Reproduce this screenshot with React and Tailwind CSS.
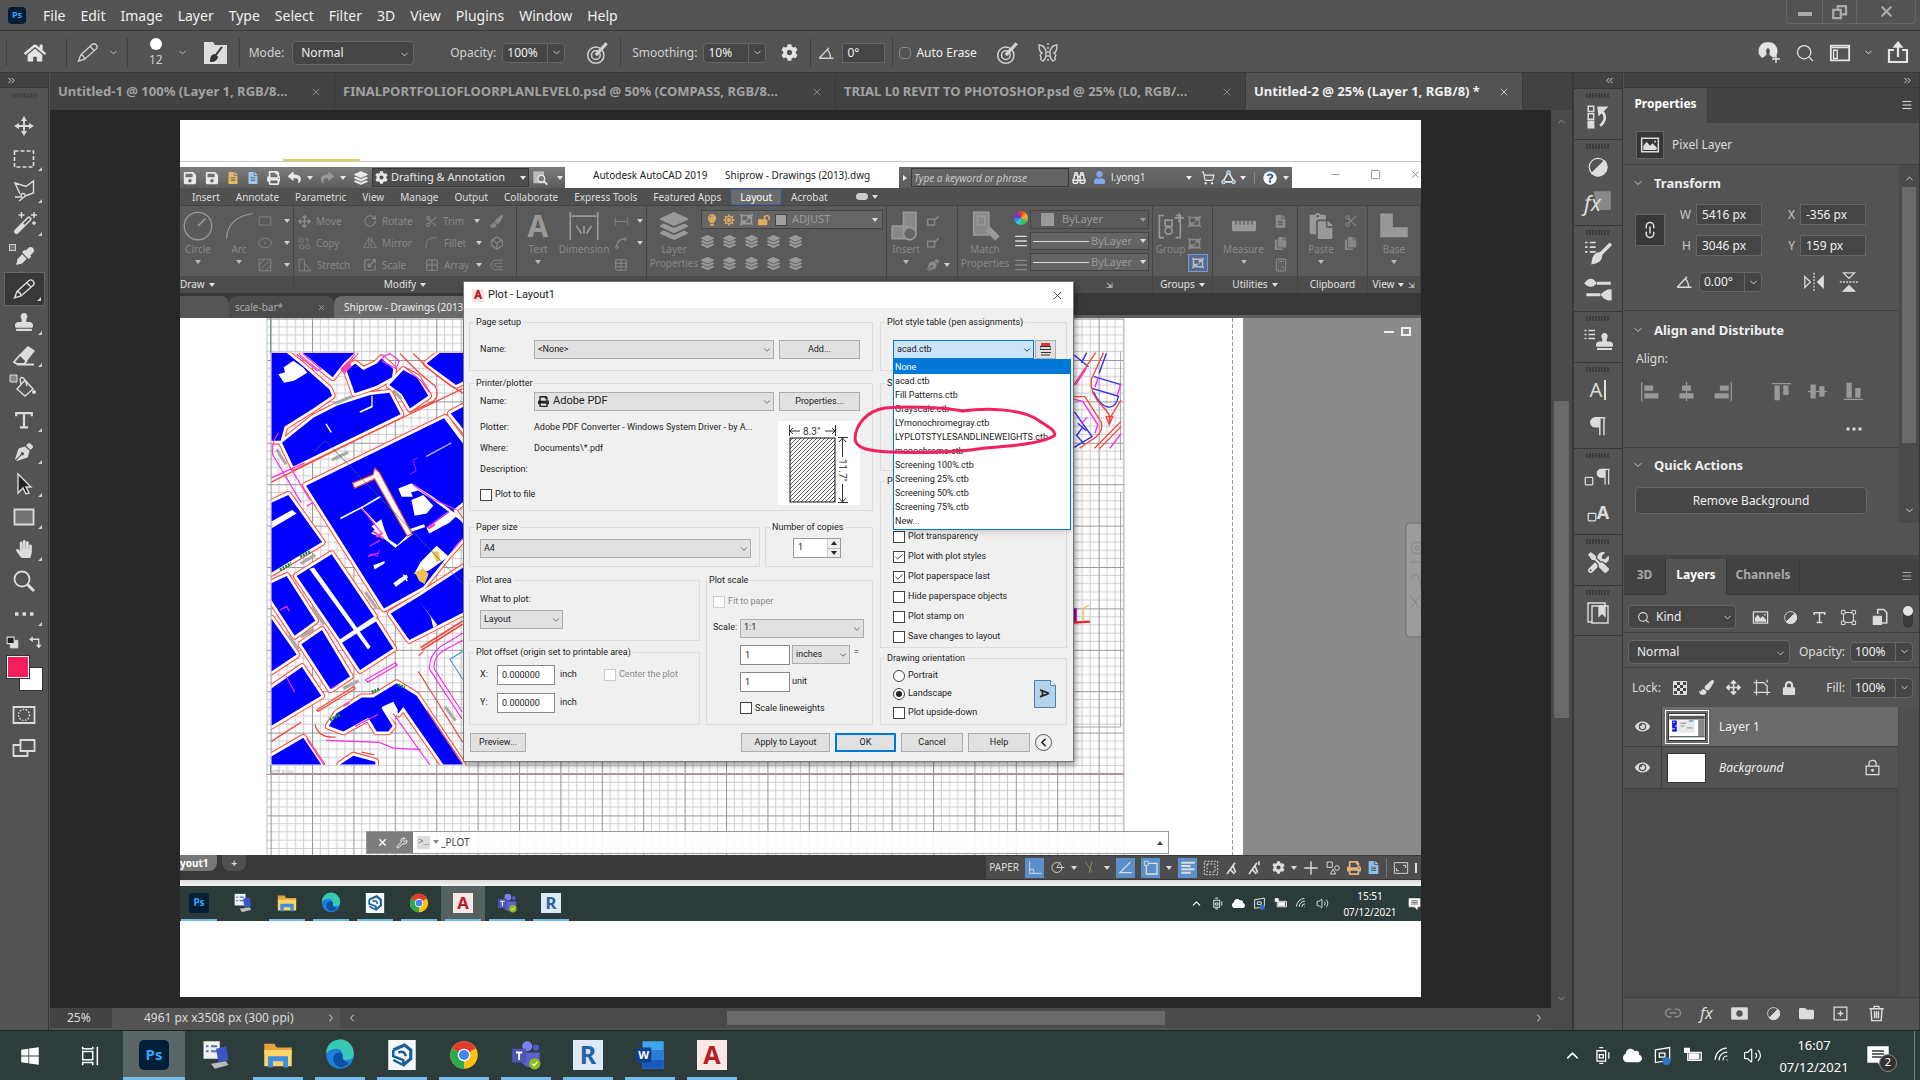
import React from 'react';
import {
  ChevronDown, ChevronUp, ChevronRight, ChevronLeft, ChevronsLeft, ChevronsRight, X, Menu, Search,
  Check, Wifi, Volume2, Binoculars, ShoppingCart, Wrench, Link2, Minus, Square,
  Calculator, Table, Box, Scissors, Circle, Spline, RotateCw, Grid2x2, Scaling,
} from 'lucide-react';
import {
  FaHome, FaHandPaper, FaStamp, FaLock, FaPaintBrush, FaWindows, FaCog, FaEye, FaFolder,
  FaUser, FaSave, FaPrint, FaReply, FaShare, FaLayerGroup, FaPaste, FaCopy, FaObjectGroup, FaRulerHorizontal,
  FaEyeDropper, FaPenNib, FaCloud, FaLightbulb, FaSun, FaLockOpen, FaQuestionCircle, FaTools,
  FaArrowsAlt, FaFileAlt,
} from 'react-icons/fa';

const menus = ['File', 'Edit', 'Image', 'Layer', 'Type', 'Select', 'Filter', '3D', 'View', 'Plugins', 'Window', 'Help'];

const files = [
  { name: 'Untitled-1 @ 100% (Layer 1, RGB/8...', width: 'w-[285px]' },
  { name: 'FINALPORTFOLIOFLOORPLANLEVEL0.psd @ 50% (COMPASS, RGB/8...', width: 'w-[501px]' },
  { name: 'TRIAL L0 REVIT TO PHOTOSHOP.psd @ 25% (L0, RGB/...', width: 'w-[410px]' },
  { name: 'Untitled-2 @ 25% (Layer 1, RGB/8) *', width: 'w-[277px]', active: true },
];

const plotStyles = [
  'None', 'acad.ctb', 'Fill Patterns.ctb', 'Grayscale.ctb', 'LYmonochromegray.ctb', 'LYPLOTSTYLESANDLINEWEIGHTS.ctb',
  'monochrome.ctb', 'Screening 100%.ctb', 'Screening 25%.ctb', 'Screening 50%.ctb', 'Screening 75%.ctb', 'New...',
];

function Svg({ size = 24, className = '', children }) {
  return (
    <svg width={size} height={size} viewBox="0 0 24 24" fill="none" stroke="currentColor" strokeWidth="1.4" className={`shrink-0 overflow-visible ${className}`}>
      {children}
    </svg>
  );
}

function Caret({ className = '' }) {
  return (
    <svg width="6" height="4" viewBox="0 0 6 4" fill="currentColor" className={`shrink-0 ${className}`}>
      <path d="M0 0h6L3 4z" />
    </svg>
  );
}

/* ---------- shared glyphs ---------- */

const PencilGlyph = ({ size = 24 }) => (
  <Svg size={size}>
    <path d="M2.500 21L5 14.500 17 3.500q2-1.500 4 .5t.5 4L9 19zM14.500 5.500l5 5M5 14.500q3.500.5 4 4.500" />
  </Svg>
);

const HalfCircle = ({ size = 24 }) => (
  <Svg size={size}>
    <circle cx="12" cy="12" r="9.500" />
    <path d="M19 5a9.500 9.500 0 0 1-14 14z" fill="currentColor" />
  </Svg>
);

const AngleGlyph = ({ size = 20 }) => (
  <Svg size={size}>
    <path d="M3 19h19M3 19L16 5M14 8q4 4 4 11" strokeWidth="1.800" />
  </Svg>
);

const TargetPen = () => (
  <Svg size={26}>
    <circle cx="10" cy="14" r="7.500" />
    <circle cx="10" cy="14" r="4" />
    <path d="M10 14L20 3" strokeWidth="3" />
  </Svg>
);

const Pilcrow = ({ size = 22 }) => (
  <Svg size={size}>
    <path d="M13 3H9a5 5 0 0 0 0 10h4z" fill="currentColor" />
    <path d="M10 3h10M14 3v19M18.500 3v19" strokeWidth="1.600" />
  </Svg>
);

const Picture = ({ size = 18 }) => (
  <Svg size={size}>
    <path d="M2 4h20v16H2z" strokeWidth="1.800" />
    <path d="M4 18v-5l4-5 4 5 3-3 5 5v3z" fill="currentColor" stroke="none" />
    <path d="M17 7h2v2h-2z" fill="currentColor" stroke="none" />
  </Svg>
);

const TypeGlyph = ({ size = 24 }) => (
  <Svg size={size}><path d="M3.500 8V4.500h17V8M12 4.500v15M7.500 20h9" strokeWidth="2.400" /></Svg>
);

const Trash = () => (
  <Svg size={19}>
    <path d="M3 6h18M9 6V3h6v3M5 6l1 15h12l1-15M9.500 9v9M12 9v9M14.500 9v9" strokeWidth="1.800" />
  </Svg>
);

/* ---------- form bits ---------- */

function DarkSelect({ label, value, className }) {
  return (
    <div className={`relative ${className}`}>
      <select aria-label={label} className="h-6 w-full appearance-none rounded-sm border border-[#666] bg-[#454545] pl-2 text-[12px] text-[#eee]">
        <option>{value}</option>
      </select>
      <ChevronDown size={11} className="pointer-events-none absolute right-1 top-[8px] text-[#ccc]" />
    </div>
  );
}

function DarkCombo({ label, value }) {
  return (
    <div className="flex h-5 rounded-sm border border-[#666] bg-[#454545]">
      <input aria-label={label} defaultValue={value} className="w-[44px] bg-transparent pl-1 text-[12px] text-[#eee]" />
      <button aria-label={`${label} options`} className="flex w-[17px] items-center justify-center border-l border-[#666]">
        <ChevronDown size={11} />
      </button>
    </div>
  );
}

function Sel({ label, value, className = '', children }) {
  return (
    <div className={`relative h-[19px] ${className}`}>
      {children}
      <select aria-label={label} className={`h-full w-full appearance-none border border-[#adadad] bg-[#e1e1e1] ${children ? 'pl-[18px] text-[11px]' : 'pl-[3px]'}`}>
        <option>{value}</option>
      </select>
      <ChevronDown size={10} className="pointer-events-none absolute right-[2px] top-[5px] text-[#555]" />
    </div>
  );
}

function Btn({ children, className = '' }) {
  return <button className={`h-[19px] border border-[#adadad] bg-[#e1e1e1] ${className}`}>{children}</button>;
}

function Tick({ children, checked, disabled, type = 'checkbox', className = '' }) {
  return (
    <label className={`flex items-center gap-[3px] ${disabled ? 'text-[#8a8a8a]' : ''} ${className}`}>
      <span className="relative flex h-3 w-3 shrink-0">
        <input
          type={type}
          name={type === 'radio' ? 'orientation' : undefined}
          defaultChecked={checked}
          disabled={disabled}
          className={`h-3 w-3 appearance-none border bg-white ${disabled ? 'border-[#ccc]' : 'border-[#444]'} ${type === 'radio' ? 'rounded-full' : ''}`}
        />
        {checked && type === 'checkbox' && <Check size={10} className="pointer-events-none absolute left-px top-px text-[#222]" />}
        {checked && type === 'radio' && <span className="pointer-events-none absolute left-[3px] top-[3px] h-[6px] w-[6px] rounded-full bg-[#222]" />}
      </span>
      {children}
    </label>
  );
}

function Group({ title, className = '', children }) {
  return (
    <fieldset className={`min-w-0 border border-[#dcdcdc] px-[10px] ${className}`}>
      <legend className="ml-[-6px] h-3 px-[2px] leading-[12px]">{title}</legend>
      {children}
    </fieldset>
  );
}

/* ---------- Photoshop chrome ---------- */

function MenuBar() {
  return (
    <header className="flex h-[30px] shrink-0 items-center pl-2">
      <span className="flex h-[17px] w-[18px] items-center justify-center rounded bg-[#001e36] text-[9px] font-bold text-[#31a8ff]">Ps</span>
      <nav className="ml-[17px] flex gap-[15px] text-[14px] text-[#f0f0f0]">
        {menus.map((m) => (
          <button key={m}>{m}</button>
        ))}
      </nav>
      <div className="ml-auto mr-1 flex h-6 self-start rounded-b border border-t-0 border-[#666] text-[#aaa]">
        <button aria-label="Minimise" className="flex w-9 items-center justify-center border-r border-[#666]">
          <span className="mt-1 h-[4px] w-[14px] bg-[#aaa]" />
        </button>
        <button aria-label="Restore" className="flex w-[34px] items-center justify-center border-r border-[#666]">
          <Svg size={18}><path d="M3 9h10v11H3zM9 9V4h11v11h-7" strokeWidth="3" /></Svg>
        </button>
        <button aria-label="Close" className="flex w-[58px] items-center justify-center"><X size={17} strokeWidth={3} /></button>
      </div>
    </header>
  );
}

const Sep = () => <span className="h-[29px] w-px shrink-0 bg-[#404040]" />;

function OptionsBar() {
  return (
    <div className="flex h-[43px] shrink-0 items-center border-y border-[#383838] pt-[2px] text-[12px] text-[#d0d0d0]">
      <span className="ml-[6px] h-6 border-l border-dotted border-[#333]" />
      <button aria-label="Home" className="ml-[17px] text-[#e4e4e4]"><FaHome size={22} /></button>
      <div className="ml-[20px] flex items-center gap-[9px]">
        <Sep />
        <PencilGlyph size={23} />
        <ChevronDown size={11} />
        <span className="ml-[-1px] flex"><Sep /></span>
      </div>
      <div className="ml-[21px] flex flex-col items-center">
        <span className="h-3 w-3 rounded-full bg-white" />
        <span className="mt-[3px] leading-[14px]">12</span>
      </div>
      <ChevronDown size={11} className="ml-[14px]" />
      <svg width="23" height="22" viewBox="0 0 23 22" className="ml-[16px]">
        <path d="M0 0h9l2 3h12v19H0z" fill="#ddd" />
        <path d="M18 5l-7 9M11 13q-4 0-4 6q5 0 6-4z" stroke="#333" strokeWidth="2" fill="#333" />
      </svg>
      <span className="ml-[12px] flex"><Sep /></span>
      <span className="ml-[9px]">Mode:</span>
      <DarkSelect label="Mode" value="Normal" className="ml-[8px] w-[122px]" />
      <span className="ml-[36px] mr-[6px]">Opacity:</span>
      <DarkCombo label="Opacity" value="100%" />
      <span className="ml-[20px]"><TargetPen /></span>
      <span className="ml-[9px] mr-[11px] flex"><Sep /></span>
      <span className="mr-[6px]">Smoothing:</span>
      <DarkCombo label="Smoothing" value="10%" />
      <FaCog size={17} className="ml-[15px] text-[#e4e4e4]" />
      <span className="ml-[12px] mr-[6px] flex"><Sep /></span>
      <AngleGlyph size={18} />
      <input aria-label="Brush angle" defaultValue="0°" className="ml-[7px] h-5 w-[43px] border border-[#666] bg-[#454545] pl-1 text-[#eee]" />
      <span className="ml-[7px] mr-[6px] flex"><Sep /></span>
      <label className="flex items-center gap-[5px] text-[#eee]">
        <input type="checkbox" className="h-3 w-3 appearance-none rounded-sm border border-[#888]" />
        Auto Erase
      </label>
      <span className="ml-[18px]"><TargetPen /></span>
      <Svg size={24} className="ml-[15px]">
        <path d="M12 2v20" strokeDasharray="2 2" />
        <path d="M10 10Q8 4 3 4q0 7 3 8q-3 2-1 4q-1 3 2 4q3-2 3-6zM14 10q2-6 7-6q0 7-3 8q3 2 1 4q1 3-2 4q-3-2-3-6z" />
      </Svg>
      <div className="ml-auto flex items-center pr-[10px] text-[#e4e4e4]">
        <Svg size={24}>
          <path d="M10 2a8 8 0 0 0-6 14q3-1 4-3q-2-5 2-7q4 2 2 7q1 2 4 3a8 8 0 0 0-6-14z" fill="currentColor" />
          <path d="M18 14v8M14 18h8" />
        </Svg>
        <Search size={20} strokeWidth={1.500} className="ml-[13px]" />
        <Svg size={22} className="ml-[14px]">
          <path d="M2 4h20v16H2z" strokeWidth="2" /><path d="M3 6h19M5 9h4v9H5z" strokeWidth="1.500" />
        </Svg>
        <ChevronDown size={11} className="ml-[12px]" />
        <Svg size={24} className="ml-[12px]">
          <path d="M8 9H3v12h18V9h-5M12 16V4" strokeWidth="2.200" /><path d="M8 6l4-5 4 5z" fill="currentColor" />
        </Svg>
      </div>
    </div>
  );
}

const Swatch = () => (
  <path d="M-2 0h7v7h-7z" fill="#8a8a8a" strokeWidth="1" />
);

const tools = [
  ['Move', <Svg><path d="M12 4v16M4 12h16" strokeWidth="1.800" /><path d="M12 2l3 5H9zM12 22l3-5H9zM2 12l5-3v6zM22 12l-5-3v6z" fill="currentColor" stroke="none" /></Svg>],
  ['Marquee', <Svg><path d="M2.500 4h19v16h-19z" strokeDasharray="4 2" strokeWidth="1.600" /></Svg>],
  ['Lasso', <Svg><path d="M8 15L3 4l11 3.500L21.500 2v12L13 17M11 14.500a2 2 0 1 0 .1 0M9 18H3M11 19l-4 3" /></Svg>],
  ['Magic wand', <Svg><path d="M4.500 20.500L17 8" strokeWidth="5" strokeLinecap="round" /><path d="M12.500 12.500L17 8" stroke="#535353" strokeWidth="2" strokeLinecap="round" /><path d="M9.500 1v6M6.500 4h6M22 1v6M19 4h6M22 10v4M20 12h4" /></Svg>],
  ['Eyedropper', <span className="flex items-center pr-[5px]"><span className="mb-4 h-[7px] w-[7px] border border-[#ccc] bg-[#777]" /><FaEyeDropper size={18} /></span>],
  ['Pencil', <PencilGlyph />],
  ['Stamp', <FaStamp size={18} />],
  ['Eraser', <Svg><path d="M8 12l8-8 6 4-8 10z" fill="currentColor" /><path d="M8 12l-6 7 3 2h7l3-3.500M5 21.500h17" strokeWidth="1.800" /></Svg>],
  ['Bucket', <Svg><path d="M5 14l8-9 8 9-8 7zM9 9q-2-7 1-6.500T15 11" /><circle cx="22" cy="17" r="2" fill="currentColor" stroke="none" /><Swatch /></Svg>],
  ['Type', <TypeGlyph size={22} />],
  ['Pen', <FaPenNib size={18} />],
  ['Path selection', <Svg><path d="M6 2v19l5-5 3 6 3-1-3-6h5z" fill="#222" /></Svg>],
  ['Rectangle', <Svg><path d="M2.500 4.500h19v15h-19z" fill="#737373" strokeWidth="1.800" /></Svg>],
  ['Hand', <FaHandPaper size={18} />],
  ['Zoom', <Svg><circle cx="10" cy="10" r="7.500" strokeWidth="1.800" /><path d="M15 15l7 7" strokeWidth="3" /></Svg>],
  ['More', <Svg><path d="M3 12h3.500M10.500 12H14M18 12h3.500" strokeWidth="3.500" /></Svg>],
];

function ToolStrip() {
  return (
    <aside className="flex w-[49px] shrink-0 flex-col items-center border-r border-[#383838] text-[#dcdcdc]">
      <div className="flex h-[15px] w-full items-center border-b border-[#383838] bg-[#424242] pl-[6px]"><ChevronsRight size={11} /></div>
      <span className="mt-[5px] h-[5px] w-[25px] bg-[repeating-linear-gradient(90deg,#444_0_2px,#535353_2px_3px)]" />
      <div className="mt-[12px] flex h-[520px] w-[41px] flex-col">
        {tools.map(([name, glyph]) => (
          <button
            key={name}
            aria-label={name}
            className={`relative flex flex-1 items-center justify-center ${name === 'Pencil' ? 'border border-[#666] bg-[#383838]' : ''}`}
          >
            {glyph}
            {!['Move', 'Zoom', 'Eyedropper', 'Bucket'].includes(name) && (
              <svg width="4" height="4" viewBox="0 0 4 4" className="absolute bottom-[4px] right-[3px]"><path d="M4 0v4H0z" fill="#ccc" /></svg>
            )}
          </button>
        ))}
      </div>
      <div className="mt-[6px] flex w-[36px] items-center justify-between">
        <Svg size={13}><path d="M8 8h14v14H8z" fill="#ddd" /><path d="M2 2h13v12H2z" fill="#222" strokeWidth="2" /></Svg>
        <Svg size={13}><path d="M3 6h15v14" strokeWidth="2.500" /><path d="M7 1v10L0 6zM13 16h10l-5 7z" fill="currentColor" stroke="none" /></Svg>
      </div>
      <div className="relative mt-[6px] h-[36px] w-[37px]">
        <span className="absolute bottom-0 right-0 h-6 w-6 border border-[#333] bg-white" />
        <span className="absolute left-0 top-0 h-6 w-6 border border-[#333] bg-white p-px"><span className="block h-full bg-[#f91d5b]" /></span>
      </div>
      <Svg size={24} className="mt-[12px]"><path d="M1.500 4h21v16h-21z" strokeWidth="1.800" /><circle cx="12" cy="12" r="5.500" strokeDasharray="1.500 1.500" /></Svg>
      <Svg size={24} className="mt-[9px]"><path d="M8 9H1.500v11h14v-4M8.500 4h14v11h-14z" strokeWidth="1.800" /></Svg>
    </aside>
  );
}

/* ---------- AutoCAD screenshot on the artboard ---------- */

function QuickAccess() {
  return (
    <div className="flex h-[27px] shrink-0 items-start overflow-hidden border-t border-[#c8c8c8] bg-white text-[11px]">
      <div className="mt-[5px] flex h-[21px] w-[385px] shrink-0 items-center bg-gradient-to-b from-[#7c7c7c] to-[#5c5c5c] text-[#e8e8e8]">
        <div className="flex w-[192px] items-center gap-[8px] pl-[3px]">
          <FaSave size={14} /><FaSave size={14} /><FaFileAlt size={12} className="text-[#e6b565]" />
          <FaFileAlt size={12} className="text-[#9cc9ef]" /><FaPrint size={14} /><FaReply size={13} />
          <Caret className="ml-[-2px]" /><FaShare size={13} className="text-[#999]" /><Caret className="ml-[-2px]" />
          <FaLayerGroup size={14} className="ml-auto mr-[4px]" />
        </div>
        <button className="flex h-[19px] w-[157px] items-center gap-[3px] border border-[#3a3a3a] bg-[#4e4e4e] px-[2px] text-[11px]">
          <FaCog size={13} />Drafting &amp; Annotation<Caret className="ml-auto" />
        </button>
        <Svg size={16} className="ml-[3px]"><path d="M2 2h16v18H2z" fill="#bbb" stroke="none" /><circle cx="14" cy="13" r="5" fill="#777" strokeWidth="2" /><path d="M18 17l5 5" strokeWidth="3" /></Svg>
        <Caret className="ml-[9px]" />
      </div>
      <span className="ml-[28px] mt-[6px] w-[132px] whitespace-nowrap text-[10px] text-[#222]">Autodesk AutoCAD 2019</span>
      <span className="mt-[6px] w-[174px] whitespace-nowrap text-[10px] text-[#222]">Shiprow - Drawings (2013).dwg</span>
      <div className="mt-[5px] flex h-[21px] w-[393px] shrink-0 items-center bg-gradient-to-b from-[#6a6a6a] to-[#5c5c5c] text-[#e8e8e8]">
        <span className="flex w-3 -rotate-90 justify-center"><Caret /></span>
        <input aria-label="Search" placeholder="Type a keyword or phrase" className="h-[19px] w-[158px] border border-[#3a3a3a] bg-[#636363] pl-[2px] text-[10px] italic placeholder:text-[#c8c8c8]" />
        <Binoculars size={14} strokeWidth={2.500} className="ml-[3px]" /><FaUser size={13} className="ml-[7px] text-[#7da7e8]" />
        <span className="ml-[5px] text-[10px]">l.yong1</span><Caret className="ml-auto" />
        <ShoppingCart size={14} className="ml-[9px]" />
        <Svg size={15} className="ml-[6px]"><path d="M12 3l9 16H3z" strokeWidth="2.500" /><circle cx="12" cy="4" r="3" fill="#7da7e8" /><circle cx="4" cy="19" r="3" fill="#7da7e8" /><circle cx="20" cy="19" r="3" fill="#7da7e8" /></Svg>
        <Caret className="ml-[4px]" /><span className="ml-[8px] h-3 w-px bg-[#888]" />
        <FaQuestionCircle size={14} className="ml-[8px] rounded-full bg-[#2b5da8] text-white" /><Caret className="ml-[6px] mr-[3px]" />
      </div>
      <div className="ml-auto mt-[7px] flex gap-[29px] text-[#888]">
        <Minus size={11} /><Square size={11} /><X size={11} />
      </div>
    </div>
  );
}

function RibbonPanel({ title, className = '', children }) {
  return (
    <section className={`flex shrink-0 flex-col overflow-hidden border-r border-[#444] ${className}`}>
      <div className="flex h-[70px] pt-1">{children}</div>
      <div className="flex h-[17px] items-center justify-center gap-1 bg-[#4c4c4c] text-[10px] text-[#e0e0e0]">{title}</div>
    </section>
  );
}

function BigTool({ icon, label, arrow = true, className = '' }) {
  return (
    <button className={`flex flex-col items-center text-[10px] leading-[14px] text-[#888] ${className}`}>
      <span className="flex h-[32px] items-center justify-center text-[#999]">{icon}</span>
      <span className="whitespace-pre-line">{label}</span>
      {arrow && <Caret className="mt-1 text-[#bbb]" />}
    </button>
  );
}

function SmallTool({ icon, label, arrow, className = '' }) {
  return (
    <button className={`flex h-[22px] items-center gap-[5px] text-[10px] text-[#888] ${className}`}>
      {icon}{label}{arrow && <Caret className="ml-auto text-[#ccc]" />}
    </button>
  );
}

const ribbonTabs = ['Insert', 'Annotate', 'Parametric', 'View', 'Manage', 'Output', 'Collaborate', 'Express Tools', 'Featured Apps', 'Layout', 'Acrobat'];

function Ribbon() {
  return (
    <div className="shrink-0 bg-[#5a5a5a]">
      <div className="flex h-[18px] items-center border-b border-[#444] bg-[#505050] pl-1 text-[10px] text-[#ddd]">
        {ribbonTabs.map((t) => (
          <button key={t} className={`h-[16px] whitespace-nowrap px-2 leading-[14px] ${t === 'Layout' ? 'mx-[2px] border border-[#3f66a8] bg-[#6c6c6c] text-white' : ''}`}>{t}</button>
        ))}
        <span className="ml-[20px] h-[7px] w-3 rounded-sm bg-[#ccc]" /><Caret className="ml-1" />
      </div>
      <div className="flex h-[87px] overflow-hidden">
        <RibbonPanel title={<span className="flex w-full items-center gap-1">Draw <Caret /></span>} className="w-[114px]">
          <BigTool icon={<Svg size={30}><circle cx="12" cy="12" r="11" strokeWidth="1" /><path d="M12 12l6-6" /></Svg>} label="Circle" className="w-[40px] pr-1" />
          <BigTool icon={<Svg size={30}><path d="M2 22Q3 5 23 2" strokeWidth="1" /></Svg>} label="Arc" className="w-[38px]" />
          <div className="flex w-[32px] flex-col">
            <SmallTool icon={<Svg size={14}><path d="M2 5h20v14H2z" /></Svg>} arrow /><SmallTool icon={<Svg size={14}><ellipse cx="12" cy="12" rx="11" ry="8" /><circle cx="12" cy="12" r="1" /></Svg>} arrow /><SmallTool icon={<Svg size={14}><path d="M2 2h20v20H2zM2 12L12 2M2 22L22 2M12 22l10-10" /></Svg>} arrow />
          </div>
        </RibbonPanel>
        <RibbonPanel title={<>Modify <Caret /></>} className="w-[223px]">
          <div className="grid w-full grid-cols-[65px_62px_65px_20px] content-start pl-[4px]">
            <SmallTool icon={<FaArrowsAlt size={13} />} label="Move" />
            <SmallTool icon={<RotateCw size={14} />} label="Rotate" />
            <SmallTool icon={<Scissors size={13} />} label="Trim" arrow className="pr-[10px]" />
            <SmallTool icon={<FaPaintBrush size={13} />} />
            <SmallTool icon={<Svg size={13}><circle cx="6" cy="6" r="4" /><circle cx="7" cy="18" r="4" /><circle cx="18" cy="18" r="4" /><path d="M13 4h5v6" /></Svg>} label="Copy" />
            <SmallTool icon={<Svg size={14}><path d="M10 3v17H1zM14 3v17h9z" /></Svg>} label="Mirror" />
            <SmallTool icon={<Svg size={14}><path d="M2 22V12Q3 3 20 3" /></Svg>} label="Fillet" arrow className="pr-[8px]" />
            <SmallTool icon={<Box size={14} />} />
            <SmallTool icon={<Svg size={14}><path d="M2 2h9v20H2zM11 9l11 13H11" /></Svg>} label="Stretch" />
            <SmallTool icon={<Scaling size={14} />} label="Scale" />
            <SmallTool icon={<Grid2x2 size={14} />} label="Array" arrow className="pr-[8px]" />
            <SmallTool icon={<Svg size={14}><path d="M22 4H10a8 8 0 0 0 0 16h12M22 9H11a3 3 0 0 0 0 6h11" /></Svg>} />
          </div>
        </RibbonPanel>
        <RibbonPanel className="w-[130px]">
          <BigTool icon={<span className="text-[30px] font-bold leading-[32px]">A</span>} label="Text" className="w-[42px]" />
          <BigTool icon={<Svg size={30}><path d="M1 1v22M23 1v22M2 4h20M12 12v6M6 12l4 6M18 12l-4 6" /></Svg>} label="Dimension" arrow={false} className="w-[50px]" />
          <div className="flex w-[34px] flex-col pl-[5px]">
            <SmallTool icon={<Svg size={15}><path d="M2 5v14M22 5v14M2 12h20" /></Svg>} arrow />
            <SmallTool icon={<Spline size={14} />} arrow /><SmallTool icon={<Table size={14} />} />
          </div>
        </RibbonPanel>
        <RibbonPanel className="w-[240px]">
          <BigTool icon={<FaLayerGroup size={28} />} label={'Layer\nProperties'} arrow={false} className="w-[54px]" />
          <div className="flex-1">
            <div className="mr-[3px] flex h-[19px] items-center gap-[5px] border border-[#444] bg-[#666] px-1 text-[11px] text-[#999]">
              <FaLightbulb size={12} className="text-[#e0a860]" /><FaSun size={12} className="text-[#e0a860]" />
              <FaObjectGroup size={13} /><FaLockOpen size={12} className="text-[#e0a860]" />
              <span className="h-3 w-3 border border-[#444] bg-[#a0a0a0]" />ADJUST<Caret className="ml-auto text-[#ddd]" />
            </div>
            <div className="grid w-[110px] grid-cols-5 gap-y-[9px] pt-[6px] text-[#999]">
              {[0, 1, 2, 3, 4, 5, 6, 7, 8, 9].map((i) => <FaLayerGroup key={i} size={13} />)}
            </div>
          </div>
        </RibbonPanel>
        <RibbonPanel className="w-[71px]">
          <BigTool icon={<Svg size={30}><path d="M1 12h12v10H1zM10 1h10v14H10z" fill="#888" /><circle cx="15" cy="18" r="5" fill="#666" /></Svg>} label="Insert" className="w-[38px]" />
          <div className="flex flex-col pl-[2px]">
            <SmallTool icon={<Svg size={14}><path d="M1 9h12v10H1zM12 12l8-8" strokeWidth="2.500" /></Svg>} />
            <SmallTool icon={<Svg size={14}><path d="M1 9h12v10H1zM12 12l8-8" strokeWidth="2.500" /></Svg>} />
            <SmallTool icon={<FaPenNib size={12} />} arrow />
          </div>
        </RibbonPanel>
        <RibbonPanel title={<><Caret className="ml-[40px]" /><span className="ml-[58px] text-[8px]">⇲</span></>} className="w-[195px]">
          <BigTool icon={<Svg size={30}><path d="M3 1h12v18H3zM6 4h6v7H6z" fill="#888" /><path d="M14 14l8 8" strokeWidth="5" /></Svg>} label={'Match\nProperties'} arrow={false} className="w-[54px]" />
          <div className="flex w-[17px] flex-col items-center gap-[8px] pt-px">
            <span className="h-[14px] w-[14px] rounded-full bg-[conic-gradient(#e33,#fa3,#3b5,#3cd,#53e,#e33)]" />
            <Menu size={16} /><Menu size={16} className="text-[#888]" />
          </div>
          <div className="ml-px flex flex-1 flex-col gap-[3px] pr-[3px] text-[11px] text-[#999]">
            <div className="flex h-[19px] items-center border border-[#444] px-[10px] pr-[2px]"><span className="mr-2 h-[13px] w-[13px] bg-[#999]" />ByLayer<Caret className="ml-auto" /></div>
            {[1, 2].map((n) => (
              <div key={n} className="flex h-[18px] items-center gap-[2px] border border-[#444] bg-[#646464] px-[2px]"><span className="h-px w-[56px] bg-[#ddd]" />ByLayer<Caret className="ml-auto text-[#ddd]" /></div>
            ))}
          </div>
        </RibbonPanel>
        <RibbonPanel title={<>Groups <Caret /></>} className="w-[60px]">
          <BigTool icon={<Svg size={28}><path d="M6 3H2v19h4M16 3h4v19h-4M7 7h6v5H7z" /><circle cx="10" cy="16" r="3" /><path d="M19 1v8M15 5h8" /></Svg>} label="Group" arrow={false} className="w-[35px]" />
          <div className="flex flex-col">
            <SmallTool icon={<FaObjectGroup size={13} />} /><SmallTool icon={<FaObjectGroup size={13} />} />
            <span className="flex h-[18px] w-[20px] items-center justify-center border border-[#7d96c8] bg-[#566a94]"><FaObjectGroup size={12} className="text-[#bbb]" /></span>
          </div>
        </RibbonPanel>
        <RibbonPanel title={<>Utilities <Caret /></>} className="w-[85px]">
          <BigTool icon={<FaRulerHorizontal size={24} />} label="Measure" className="w-[61px]" />
          <div className="flex flex-col">
            <SmallTool icon={<FaFileAlt size={13} />} /><SmallTool icon={<FaCopy size={13} />} /><SmallTool icon={<Calculator size={14} />} />
          </div>
        </RibbonPanel>
        <RibbonPanel title="Clipboard" className="w-[70px]">
          <BigTool icon={<FaPaste size={26} />} label="Paste" className="w-[46px]" />
          <div className="flex flex-col">
            <SmallTool icon={<Scissors size={14} />} /><SmallTool icon={<FaCopy size={13} />} />
          </div>
        </RibbonPanel>
        <RibbonPanel title={<>View <Caret /><span className="text-[8px]">⇲</span></>} className="min-w-0 flex-1">
          <BigTool icon={<Svg size={30}><path d="M1 2h10v11h12v8H1z" fill="#999" stroke="none" /></Svg>} label="Base" className="w-full" />
        </RibbonPanel>
      </div>
      <div className="flex h-[25px] items-end bg-[#383838] text-[10px]">
        <span className="h-[22px] w-[49px] rounded-tr-lg bg-[#555]" />
        <button className="flex h-[22px] w-[105px] items-center justify-between rounded-t-lg bg-[#4c4c4c] px-[6px] pr-[8px] text-[#aaa]">scale-bar* <X size={9} /></button>
        <button className="h-[22px] w-[160px] whitespace-nowrap rounded-t-lg bg-[#6a6a6a] pl-[10px] text-left text-[#eee]">Shiprow - Drawings (2013</button>
        <span className="h-[3px] flex-1 bg-[#5e5e5e]" />
      </div>
    </div>
  );
}

const blocks = [
  '274,120 320,120 368,156 448,222 456,240 400,276 314,326 302,366 274,366',
  '368,120 524,120 490,150 458,188',
  '500,170 525,150 550,168 590,150 605,135 640,165 636,188 590,212 524,233',
  '628,210 670,168 712,190 745,240 690,276 665,235',
  '740,150 780,120 860,120 860,195 828,210',
  '306,372 400,302 470,268 570,238 628,232 662,292 340,438',
  '378,492 795,302 850,370 860,530 820,560 850,600 850,640 806,686 730,775 612,836',
  '812,290 860,266 860,345',
  '274,540 325,518 426,650 274,736',
  '274,765 320,745 406,870 344,912 274,812',
  '350,745 455,684 582,858 480,922',
  '486,932 588,872 640,948 540,1008',
  '364,936 426,896 510,1026 452,1062',
  '274,864 350,965 274,1012',
  '274,1060 366,1000 424,1080 274,1164',
  '632,850 720,800 860,715 860,842 760,890 688,924',
  '446,1165 470,1130 545,1085 580,1085 650,1045 710,1080 848,1273 790,1273 670,1112 655,1130 635,1100 605,1115 638,1165 625,1180 590,1180 565,1142 490,1180',
  '274,1250 370,1198 424,1273 274,1273',
  '480,1273 520,1248 586,1265 586,1273',
];

function Drawing() {
  return (
    <svg viewBox="180 318 1241 538" preserveAspectRatio="xMinYMin slice" className="h-full w-full bg-white">
      <defs>
        <pattern id="grid" x="312" y="360" width="41.400" height="41.400" patternUnits="userSpaceOnUse">
          <path d="M8.300 0v42M16.500 0v42M24.800 0v42M33 0v42M0 8.300h42M0 16.500h42M0 24.800h42M0 33h42" stroke="#c6c6cc" strokeWidth="0.900" />
          <path d="M.5 0v42M0 .5h42" stroke="#96969e" strokeWidth="1.100" />
        </pattern>
        <clipPath id="plan"><path d="M274 120h590v1154H274z" /></clipPath>
      </defs>
      <path d="M267 318h857v538H267z" fill="url(#grid)" stroke="#bbb" />
      <path d="M270.500 318v35M270.500 765v9" stroke="#5ba879" />
      <path d="M270 773.500h854" stroke="#c98b8b" />
      <path d="M1120.500 492v235H1070M1120.500 352v108" stroke="#aaa" fill="none" />
      <path d="M1232.500 318v538" stroke="#999" strokeDasharray="4 2" />
      <path d="M1243 318h178v538h-178z" fill="#8a8a8a" />

      <g transform="translate(180 310) scale(.3333 .3571)">
        <g clipPath="url(#plan)" strokeLinejoin="round">
          {blocks.map((p) => <polygon key={p} points={p} fill="none" stroke="#ff4b3c" strokeWidth="22" />)}
          {blocks.map((p) => <polygon key={p} points={p} fill="#fff" stroke="#fff" strokeWidth="16" />)}
          {blocks.map((p) => <polygon key={p} points={p} fill="#0000ff" />)}
          <g fill="#fff" stroke="none">
            <path d="M295 180l20-6-4-14 29-18 30 20 12 14-40 22-30 6z" />
            <path d="M274 592l62-32 14 10-76 42zM388 725l14-4 170 222-8 8zM440 318l16 24-4 2-16-24zM538 284l36-16v-28h4v32l-36 16z" />
            <path d="M480 582l70-34 50-28 2 5-52 28-68 33zM545 552l50 50-3 3-50-50z" />
            <path d="M655 500l40-15 22 20-24 6 6 12-34 0zM694 532l36-14 30 30-20 22-36 6zM700 488l60 36 90 62-4 6-90-62-60-36zM790 300l60 75v-15l-45-62z" />
            <path d="M574 606l30-20 10 30 12 26 26 16 40-36 6 6-52 38-34-26-38-14 10-12zM688 614l44-14 4 8-44 14zM740 612l50-34 20-14 28 6-30 26-60 30zM722 706l48-46 36 30-60 40-44 10zM640 765l20-14 20-10 4 8-16 12-20 14zM672 740l12 18-4 2-12-18zM722 820l50 62-12 8-8-30zM580 715l34-12v6l-30 18zM605 1112l35-15 14 24-12 30z" />
            <path d="M738 408l76-38 1 4-76 38z" fillOpacity=".7" />
          </g>
          <path d="M518 485l62-24 4-18 14 12 98 172-14 6-98-160-60 26z" fill="#fff" stroke="#ff4b3c" strokeWidth="3.500" />
          <path d="M705 735l25-12 16 16-12 28-16-8zM756 676l20 0 6 26-12 4z" fill="#f2c14e" />
          <g stroke="#aaa" strokeWidth="9"><path d="M465 262l50-20M455 420l50-22M290 390l28 42M556 790l34 45M325 910l30 40M362 916l40-22M490 1060l46-22M396 830l36 50M362 710l44-24M795 1110l32 40M640 225l24 24" /></g>
          <g fill="none" stroke="#fb2df5" strokeWidth="3.500">
            <path d="M296 345q-22 20-18 60l86 135M330 440l60 92M274 470l100-42M350 124l62 46 12-4-56-44M380 550l20-12" />
            <path d="M525 122l-40 50M610 130l20-8 28 20-10 22-40-20zM675 160l50 40 22 30M545 555l60 70M570 660l30-15M565 690l30-10M700 490l60 40 70 30M740 610l66-46M820 670l28-30" />
            <path d="M690 460l18-10-8-30 12-6M565 690l10-8 16 8 8-20" strokeOpacity=".6" />
            <path d="M556 1036l90-48 6 6-88 48zM848 905l-70 40q-30 22-30 60l98 140M848 925l-60 30q-30 20-25 50l83 120M438 1205l160 6 42 16 82 4M640 1130l110 144M525 1166l70-34M300 840l20-10 8 14M318 1025l26 45M380 1200l52 74M455 1060l18-10M490 1110l20-10" />
          </g>
          <path d="M485 165l20-18 6 10-18 18zM590 636l18-12M765 600l-20 12M610 640l-30-20" stroke="#ff3fae" strokeWidth="6" fill="#ff3fae" />
          <g fill="none" stroke="#f5483c" strokeWidth="3.500">
            <path d="M274 482L560 350l288-130M660 122q60 60 105 90 15 26-5 44l-70 30M700 122q70 70 148 110M410 1120l112-66 4 6-112 64zM274 1208l90-54M405 1160q10 40 62 36M740 1120l108 150M715 1012l133 198M716 968l14-12M545 1238l38 8" />
            <path d="M722 945l126-74M725 952l123-72" strokeWidth="5" />
          </g>
          <path d="M848 956l-38 22 38 56" fill="none" stroke="#3c9be8" strokeWidth="3.500" />
          <path d="M436 366l412 400M436 366l-34 30" stroke="#3b7a52" strokeWidth="2" />
          <path d="M450 1148l30-15M575 1070l24-8M655 1050l20 6M300 728l34-18M360 690l34-14" stroke="#1d8a43" strokeWidth="9" strokeDasharray="6 3" />
        </g>
        <text x="274" y="1298" fontSize="14" fill="#aaa">SITE PLAN</text>
      </g>

      <g transform="translate(860 280) scale(.357 .3333)" fill="none" strokeWidth="4">
        <path d="M600 225l40 35M635 218l-15 30M655 290l76 24M650 325l74 24q-8 36-30 32t-40-46M600 395l50 75-50 32M610 430l24 22M690 220l-20 60M625 440l-18 26 20 26" stroke="#3232f0" />
        <path d="M660 218l-24 38-38 60M682 218l-34 80q-6 40 30 80 30 30 20 50M598 350h32l45 75q8 26-14 46l-46 34M731 360l-34 60M690 410h18l-10 24zM731 425l-74 80M731 440l-60 66" stroke="#f5483c" />
        <path d="M668 292l-10 30M600 358l24 6 42 70-8 26M731 310l-10 35M700 505l31-44M620 430l16-18M604 315l30-50" stroke="#fb2df5" />
        <path d="M600 985v40" stroke="#a0a" strokeWidth="14" />
        <path d="M598 1028l46-3" stroke="#e22" strokeWidth="7" />
        <path d="M625 1024v-38l16-10" stroke="#f2c14e" />
      </g>

      <path d="M1384 332h10M1402 328h8v7h-8z" stroke="#eee" strokeWidth="2" fill="none" />
      <rect x="1406" y="523" width="24" height="114" rx="4" fill="#9c9c9c" stroke="#6e6e6e" />
      <g stroke="#858585" fill="none"><circle cx="1417" cy="548" r="6" /><circle cx="1417" cy="548" r="2" /><path d="M1410 595l10 14M1420 595l-10 14M1410 562h12M1410 580q3-6 6-6t5 12" /></g>
    </svg>
  );
}

function PaperPreview() {
  return (
    <svg width="82" height="84" viewBox="0 0 82 84" className="bg-white">
      <defs>
        <pattern id="hatch" width="4" height="4" patternUnits="userSpaceOnUse"><path d="M0 4L4 0M-1 1l2-2M3 5l2-2" stroke="#333" strokeWidth=".8" /></pattern>
      </defs>
      <rect x="12" y="17" width="45" height="64" fill="url(#hatch)" stroke="#111" />
      <g stroke="#333" fill="none">
        <path d="M11.500 4v11M57.500 4v11M12 10h10M47 10h10M15 7l-3 3 3 3M54 7l3 3-3 3M60 16.500h10M60 81.500h10M64.500 17v19M64.500 63v18M61 21l3.500-4 3.500 4M61 77l3.500 4 3.500-4" />
      </g>
      <text x="25" y="14" fontSize="10" fill="#333">8.3&quot;</text>
      <text x="0" y="0" fontSize="10" fill="#333" transform="translate(61 38) rotate(90)">11.7&quot;</text>
    </svg>
  );
}

function PlotDialog() {
  return (
    <div role="dialog" aria-label="Plot - Layout1" className="absolute isolate left-[283px] top-[161px] h-[481px] w-[611px] border border-[#777] bg-[#f0f0f0] font-[Roboto,sans-serif] text-[9px] text-[#222] shadow-[2px_3px_6px_rgba(0,0,0,0.4)]">
      <div className="flex h-[26px] items-center bg-white pl-2 pr-[9px] text-[11px]">
        <span className="flex h-[13px] w-[12px] items-center justify-center bg-[#fbe3e1] text-[12px] font-black text-[#b3202a]">A</span>
        <span className="ml-1">Plot - Layout1</span>
        <button aria-label="Close" className="ml-auto"><X size={13} strokeWidth={1.500} /></button>
      </div>
      <div className="flex gap-[7px] pl-[5px] pr-[6px] pt-[8px]">
        <div className="w-[404px]">
          <Group title="Page setup" className="h-[55px]">
            <div className="flex items-center pt-[12px]">
              <span className="w-[54px]">Name:</span>
              <Sel label="Page setup name" value="<None>" className="w-[240px]" />
              <Btn className="ml-[5px] w-[81px]">Add...</Btn>
            </div>
          </Group>
          <Group title="Printer/plotter" className="mt-[6px] h-[134px]">
            <div className="flex items-center pt-[3px]">
              <span className="w-[54px]">Name:</span>
              <Sel label="Printer name" value="Adobe PDF" className="w-[240px]">
                <FaPrint size={11} className="pointer-events-none absolute left-1 top-1" />
              </Sel>
              <Btn className="ml-[5px] w-[81px]">Properties...</Btn>
            </div>
            <div className="flex">
              <div className="w-[298px] pt-[6px]">
                <dl className="grid grid-cols-[54px_1fr] leading-[21px]">
                  <dt>Plotter:</dt><dd>Adobe PDF Converter - Windows System Driver - by A...</dd>
                  <dt>Where:</dt><dd>Documents\*.pdf</dd>
                  <dt>Description:</dt><dd />
                </dl>
                <Tick className="pt-[8px]">Plot to file</Tick>
              </div>
              <div className="pt-[10px]"><PaperPreview /></div>
            </div>
          </Group>
          <div className="mt-[10px] flex gap-[5px]">
            <Group title="Paper size" className="h-[46px] w-[291px]">
              <Sel label="Paper size" value="A4" className="mt-[6px] w-[271px]" />
            </Group>
            <Group title="Number of copies" className="h-[46px] w-[108px]">
              <div className="ml-[17px] mt-[5px] flex h-5 w-[48px] border border-[#999] bg-white">
                <input aria-label="Number of copies" defaultValue="1" className="w-[33px] pl-1" />
                <div className="flex flex-1 flex-col border-l border-[#ccc] bg-[#eee]">
                  <button aria-label="More copies" className="flex flex-1 items-center justify-center border-b border-[#bbb]"><Caret className="rotate-180" /></button>
                  <button aria-label="Fewer copies" className="flex flex-1 items-center justify-center"><Caret /></button>
                </div>
              </div>
            </Group>
          </div>
          <div className="mt-[7px] flex gap-[6px]">
            <div className="w-[231px]">
              <Group title="Plot area" className="h-[67px]">
                <div className="mt-[6px] leading-[14px]">What to plot:</div>
                <Sel label="What to plot" value="Layout" className="mt-1 w-[83px]" />
              </Group>
              <Group title="Plot offset (origin set to printable area)" className="mt-[5px] h-[79px]">
                <div className="mt-[7px] flex items-center">
                  <label htmlFor="off-x" className="w-[17px]">X:</label>
                  <input id="off-x" defaultValue="0.000000" className="h-5 w-[58px] border border-[#888] bg-white pl-1" />
                  <span className="ml-[5px] w-[44px]">inch</span>
                  <Tick disabled>Center the plot</Tick>
                </div>
                <div className="mt-2 flex items-center">
                  <label htmlFor="off-y" className="w-[17px]">Y:</label>
                  <input id="off-y" defaultValue="0.000000" className="h-5 w-[58px] border border-[#888] bg-white pl-1" />
                  <span className="ml-[5px]">inch</span>
                </div>
              </Group>
            </div>
            <Group title="Plot scale" className="h-[151px] w-[167px] pl-[6px] pr-0">
              <Tick disabled className="mt-[9px]">Fit to paper</Tick>
              <div className="mt-[10px] flex items-center">
                <span className="w-[27px]">Scale:</span>
                <Sel label="Scale" value="1:1" className="w-[124px]" />
              </div>
              <div className="ml-[27px] mt-[7px] flex items-center">
                <input aria-label="Paper units" defaultValue="1" className="h-5 w-[50px] border border-[#888] bg-white pl-1" />
                <Sel label="Unit" value="inches" className="ml-[2px] w-[58px]" />
                <span className="mb-1 ml-1">=</span>
              </div>
              <div className="ml-[27px] mt-[7px] flex items-center gap-[2px]">
                <input aria-label="Drawing units" defaultValue="1" className="h-5 w-[50px] border border-[#888] bg-white pl-1" />
                unit
              </div>
              <Tick className="ml-[27px] mt-[10px]">Scale lineweights</Tick>
            </Group>
          </div>
        </div>

        <div className="w-[187px]">
          <Group title="Plot style table (pen assignments)" className="h-[55px]">
            <div className="relative ml-[2px] flex items-center gap-px pt-[12px]">
              <div className="relative h-[19px] w-[141px]">
                <select aria-label="Plot style table" className="h-full w-full appearance-none border border-[#0078d7] bg-[#cce4f7] pl-[3px]">
                  <option>acad.ctb</option>
                </select>
                <ChevronDown size={10} className="pointer-events-none absolute right-[2px] top-[5px]" />
              </div>
              <button aria-label="Edit plot style" className="flex h-[19px] w-[21px] items-center justify-center border border-[#adadad] bg-[#e1e1e1]">
                <svg width="11" height="13" viewBox="0 0 11 13"><path d="M1 0h9v3H1z" fill="#d33" /><path d="M0 3.500h11v3H0zM1 9.500h10M1 12h9" stroke="#333" fill="#ddd" /></svg>
              </button>
              <ul role="listbox" className="absolute left-0 top-[31px] z-10 w-[178px] border border-[#0078d7] bg-white pb-px shadow-md">
                {plotStyles.map((s, i) => (
                  <li key={s} role="option" aria-selected={i === 0} className={`h-[14px] pl-px leading-[14px] ${i === 0 ? 'bg-[#0078d7] text-white' : ''}`}>{s}</li>
                ))}
              </ul>
            </div>
          </Group>
          <Group title="S" className="mt-[6px] h-[94px]" />
          <Group title="Pl" className="mt-[4px] h-[173px]">
            <div className="ml-[2px] flex flex-col pt-[40px]">
              <Tick className="h-5">Plot transparency</Tick>
              <Tick className="h-5" checked>Plot with plot styles</Tick>
              <Tick className="h-5" checked>Plot paperspace last</Tick>
              <Tick className="h-5">Hide paperspace objects</Tick>
              <Tick className="h-5">Plot stamp on</Tick>
              <Tick className="h-5">Save changes to layout</Tick>
            </div>
          </Group>
          <Group title="Drawing orientation" className="mt-[4px] h-[73px]">
            <div className="ml-[2px] flex justify-between pt-[3px]">
              <div>
                <Tick type="radio" className="h-[18px]">Portrait</Tick>
                <Tick type="radio" className="h-[18px]" checked>Landscape</Tick>
                <Tick className="h-[20px]">Plot upside-down</Tick>
              </div>
              <svg width="22" height="28" viewBox="0 0 22 28" className="mt-[13px]">
                <path d="M.5.5h16l5 5v22H.5z" fill="#b5d3ea" stroke="#4a7fb0" /><path d="M16.500.5v5h5" fill="#fff" stroke="#4a7fb0" />
                <text transform="translate(6 9) rotate(90)" fontSize="13" fontWeight="700" fill="#222">A</text>
              </svg>
            </div>
          </Group>
        </div>
      </div>
      <div className="flex items-center pl-[6px] pt-[8px]">
        <Btn className="w-[56px]">Preview...</Btn>
        <Btn className="ml-[215px] w-[89px]">Apply to Layout</Btn>
        <button className="ml-[5px] h-[19px] w-[61px] border-2 border-[#0078d7] bg-[#e1e1e1]">OK</button>
        <Btn className="ml-[5px] w-[62px]">Cancel</Btn>
        <Btn className="ml-[5px] w-[62px]">Help</Btn>
        <button aria-label="Less options" className="ml-[5px] flex h-[17px] w-[17px] items-center justify-center rounded-full border border-[#555]"><ChevronLeft size={13} strokeWidth={3} /></button>
      </div>
    </div>
  );
}

function CadStatusBar() {
  const blue = 'flex h-5 w-[19px] items-center justify-center bg-[#5b8fc9]';
  return (
    <div className="flex h-[25px] shrink-0 items-center bg-[#383838] text-[10px] text-[#ddd]">
      <button className="h-[16px] w-[37px] self-start rounded-br-lg bg-[#777] text-left font-bold leading-[15px] text-white">yout1</button>
      <button aria-label="New layout" className="ml-[5px] h-[16px] w-[24px] self-start rounded-b-lg bg-[#505050] font-bold leading-[14px]">+</button>
      <div className="ml-auto flex h-[23px] items-center gap-[6px] bg-[#4d4d4d] pl-[3px] pr-[4px]">
        <span>PAPER</span>
        <span className={blue}><Svg size={16}><path d="M4 2v18h18M4 14h6v6" /></Svg></span>
        <Svg size={15}><circle cx="11" cy="12" r="8" /><path d="M11 12h12M11 12l6-9" /></Svg><Caret />
        <Svg size={15}><path d="M4 3l12 18" stroke="#c66" /><path d="M14 3l-4 18" stroke="#6a6" /></Svg><Caret />
        <span className={blue}><Svg size={15}><path d="M20 3L3 20h19" strokeWidth="2" /></Svg></span>
        <span className={blue}><Svg size={16}><path d="M5 5h16v16H5z" strokeWidth="2" /><path d="M2 2h6v6H2z" fill="#5b8fc9" /></Svg></span><Caret />
        <span className={blue}><Svg size={16}><path d="M2 4h20M2 9h14M2 14h20M2 19h14" strokeWidth="3" /></Svg></span>
        <Svg size={16}><path d="M2 2h20v20H2zM6 6h12v12H6z" strokeDasharray="3 2" /></Svg>
        <Svg size={16}><path d="M3 21L15 4M8 14l6 7M12 9l4 10" strokeWidth="2.500" /></Svg>
        <Svg size={16}><path d="M3 21L15 4M8 14l6 7M12 9l4 10M18 2v6" strokeWidth="2.500" /></Svg>
        <FaCog size={13} className="ml-[3px]" /><Caret />
        <Svg size={16}><path d="M12 2v20M2 12h20" strokeWidth="2" /></Svg>
        <Svg size={16}><path d="M3 3h8v8H3zM8 21l4-7 4 7z" /><circle cx="18" cy="12" r="3.500" /></Svg>
        <FaPrint size={14} className="text-[#e0b080]" /><FaFileAlt size={13} className="text-[#8dbde8]" />
        <span className="h-5 w-px bg-[#777]" />
        <Svg size={16}><path d="M2 4h20v16H2zM15 8h4v4M9 16H5v-4" /></Svg>
        <span className="h-[10px] w-[2px] bg-[#ddd]" />
      </div>
    </div>
  );
}

/* ---------- taskbars ---------- */

function AppIcon({ name, size }) {
  const s = { width: size, height: size };
  const icons = {
    Ps: <><rect width="24" height="24" rx="4" fill="#001e36" /><text x="12" y="16" textAnchor="middle" fontSize="12" fontWeight="700" fill="#31a8ff">Ps</text></>,
    Setup: <><path d="M2 1h13v14H2z" fill="#f2f2f2" /><path d="M4 5h2M4 9h2M8 5h5M8 9h5" stroke="#4a78c0" strokeWidth="1.500" /><path d="M12 7l8-2 2 11-8 2z" fill="#3b55c8" /><path d="M8 19l12-2 2 3-11 3z" fill="#bbb" /></>,
    Explorer: <><path d="M1 3h8l2 3h12v5H1z" fill="#e8a33c" /><path d="M1 8h22v13H1z" fill="#ffd667" /><path d="M4 13h16v9h-4v-5H8v5H4z" fill="#3d8fe0" /></>,
    Edge: <><circle cx="12" cy="12" r="11" fill="#1b80d8" /><path d="M1 11a11 11 0 0 1 22-1q1 6-6 6-4 0-3-4 0-5-5-5-5 0-8 4z" fill="#38c8b4" /><path d="M13 22q-8-2-6-9 1-3 5-3 3 1 2 4 0 3 5 4-2 3-6 4z" fill="#0e4fa0" /></>,
    Sketchup: <><path d="M1 0h22v24H1z" fill="#f5f8fa" /><path d="M5 8l9-4 5 4v7l-6 5" fill="none" stroke="#1a5f9c" strokeWidth="2.500" /><path d="M5 8v5l8 3v4l-8-4M9 10q5-2 6 3" fill="none" stroke="#1a5f9c" strokeWidth="2" /></>,
    Chrome: <><circle cx="12" cy="12" r="11" fill="#fbc116" /><path d="M12 12L2.500 6.500a11 11 0 0 1 19 0z" fill="#e33b2e" /><path d="M12 12L2.500 6.500A11 11 0 0 0 12 23z" fill="#2da94f" /><circle cx="12" cy="12" r="5" fill="#fff" /><circle cx="12" cy="12" r="4" fill="#4285f4" /></>,
    Teams: <><circle cx="13" cy="5" r="4" fill="#7b83eb" /><circle cx="20" cy="6" r="2.500" fill="#5059c9" /><path d="M8 10h15v7q-2 5-7 5t-8-5z" fill="#5b62d0" /><path d="M1 7h11v11H1z" fill="#4b53bc" /><path d="M4 10h5M6.500 10v6" stroke="#fff" strokeWidth="1.500" /><circle cx="19" cy="19" r="4.500" fill="#8cbd18" /><path d="M17 19l1.500 1.500L21 17.500" stroke="#fff" fill="none" /></>,
    Revit: <><path d="M0 0h24v24H0z" fill="#dfe9f5" /><text x="12" y="19" textAnchor="middle" fontSize="20" fontWeight="700" fill="#2563a8">R</text></>,
    Word: <><path d="M6 1h17v22H6z" fill="#41a5ee" /><path d="M6 8h17v8H6z" fill="#2b7cd3" /><path d="M6 16h17v7H6z" fill="#185abd" /><path d="M1 6h12v12H1z" fill="#103f91" /><text x="7" y="15.500" textAnchor="middle" fontSize="9" fontWeight="700" fill="#fff">W</text></>,
    Autocad: <><path d="M0 0h24v24H0z" fill="#fae8e6" /><text x="12" y="19" textAnchor="middle" fontSize="20" fontWeight="700" fill="#b3202a">A</text></>,
  };
  return <svg viewBox="0 0 24 24" style={s} aria-label={name} className="overflow-visible">{icons[name]}</svg>;
}

function Tray({ size }) {
  return (
    <>
      <ChevronUp size={size} />
      <Svg size={size}><path d="M5 6h11v13H5zM8 2h5M8 22h5M20 8v8M8 11h5v4H8z" strokeWidth="1.600" /></Svg>
      <FaCloud size={size} />
      <Svg size={size}><path d="M3 5l18-3v16L3 21zM8 9h7v5H8z" strokeWidth="1.600" /><circle cx="17" cy="19" r="5" fill="#2b72c8" stroke="none" /></Svg>
      <Svg size={size}><path d="M6 8h17v10H6z" strokeWidth="1.600" /><path d="M8 10h12v6H8zM2 3h6v5H2z" fill="currentColor" /></Svg>
      <Wifi size={size} strokeWidth={1.500} className="-rotate-45" />
      <Volume2 size={size} strokeWidth={1.500} />
    </>
  );
}

const NoteIcon = ({ size }) => (
  <Svg size={size}><path d="M2 3h20v15h-5v5l-5-5H2z" fill="currentColor" /><path d="M6 7h12M6 10h12M6 13h12" stroke="#2d3d3c" /></Svg>
);

const innerApps = ['Ps', 'Setup', 'Explorer', 'Edge', 'Sketchup', 'Chrome', 'Autocad', 'Teams', 'Revit'];
const apps = ['Ps', 'Setup', 'Explorer', 'Edge', 'Sketchup', 'Chrome', 'Teams', 'Revit', 'Word', 'Autocad'];

function InnerTaskbar() {
  return (
    <div className="flex h-[35px] shrink-0 items-center overflow-hidden bg-[#2b3b39] text-[10px] text-white">
      <div className="-ml-[3px] flex h-full">
        {innerApps.map((a) => (
          <button key={a} className={`flex h-full w-[44px] flex-col items-center justify-end ${a === 'Autocad' ? 'bg-[#56625f]' : ''}`}>
            <AppIcon name={a} size={20} />
            <span className={`mt-[6px] h-[2px] w-[36px] ${a === 'Setup' ? '' : 'bg-[#76b9ed]'}`} />
          </button>
        ))}
      </div>
      <div className="ml-auto flex items-center gap-[8px]">
        <Tray size={13} />
        <div className="ml-[3px] w-[60px] text-center leading-[16px]">15:51<br />07/12/2021</div>
        <NoteIcon size={13} />
      </div>
    </div>
  );
}

function Taskbar() {
  return (
    <footer className="flex h-[50px] shrink-0 items-center border-t border-[#1c2625] bg-[#2d3d3b] text-[12px] text-white">
      <button aria-label="Start" className="flex w-[60px] justify-center"><FaWindows size={20} /></button>
      <button aria-label="Task view" className="flex w-[59px] justify-center">
        <Svg size={22}><path d="M4 7h11v9H4zM4 2v2h11V2M4 22v-3h11v3M20 2v20" strokeWidth="1.600" /></Svg>
      </button>
      <div className="ml-[4px] flex h-full">
        {apps.map((a) => (
          <button key={a} className={`flex h-full w-[62px] flex-col items-center justify-end ${a === 'Ps' ? 'bg-[#5a6664]' : ''}`}>
            <AppIcon name={a} size={30} />
            <span className={`mt-[7px] h-[3px] ${a === 'Ps' ? 'w-full bg-[#76b9ed]' : a === 'Setup' ? 'w-0' : 'w-[50px] bg-[#76b9ed]'}`} />
          </button>
        ))}
      </div>
      <div className="ml-auto flex items-center gap-[11px]">
        <Tray size={19} />
        <div className="w-[82px] text-center text-[13px] leading-[22px]">16:07<br />07/12/2021</div>
        <button aria-label="Notifications" className="relative mr-[13px]">
          <NoteIcon size={24} />
          <span className="absolute left-[13px] top-[10px] flex h-[18px] w-[18px] items-center justify-center rounded-full border border-[#888] bg-[#333] text-[11px]">2</span>
        </button>
        <span className="mr-[5px] h-[49px] w-px bg-[#788381]" />
      </div>
    </footer>
  );
}

function Artboard() {
  return (
    <div className="relative flex flex-1 flex-col overflow-hidden bg-white">
      <div className="relative h-[41px] shrink-0"><span className="absolute bottom-0 left-[103px] h-[2px] w-[77px] bg-[#d8d060]" /></div>
      <QuickAccess />
      <Ribbon />
      <div className="relative min-h-0 flex-1">
        <div className="absolute inset-0"><Drawing /></div>
        <div className="absolute bottom-[1px] left-[186px] flex h-[23px] w-[803px] border border-[#999] bg-white/90">
          <div className="flex w-[46px] shrink-0 items-center justify-end gap-[8px] bg-[#7d7d7d] pr-[5px] text-white"><X size={11} strokeWidth={3} /><Wrench size={12} /></div>
          <span className="ml-1 mt-[4px] h-[13px] w-[13px] shrink-0 bg-[#ddd] text-center font-mono text-[9px] leading-[13px] text-[#777]">&gt;_</span>
          <Caret className="ml-[3px] mt-[8px] text-[#888]" />
          <input aria-label="Command line" defaultValue="_PLOT" className="ml-[2px] w-full bg-transparent text-[10px] text-[#444]" />
          <Caret className="mr-[5px] mt-[9px] rotate-180 text-[#444]" />
        </div>
      </div>
      <CadStatusBar />
      <div className="h-[6px] shrink-0 bg-gradient-to-b from-[#ddd] to-[#f5f5f5]" />
      <InnerTaskbar />
      <div className="h-[76px] shrink-0 bg-white" />
      <PlotDialog />
      {/* pink pencil mark circling the two custom styles */}
      <svg width="210" height="56" viewBox="850 402 210 56" fill="none" className="pointer-events-none absolute left-[670px] top-[282px]">
        <path d="M964 411C940 407 905 406 885 408C866 411 856 425 855 438C855 449 870 451 890 452C925 453 960 452 985 448C1010 446 1040 444 1054 436C1058 431 1045 425 1038 420C1020 408 985 408 962 411" stroke="#f3215c" strokeWidth="3" strokeLinecap="round" />
      </svg>
    </div>
  );
}

/* ---------- right docks ---------- */

const ListLines = <path d="M1 3h2M5 3h5M1 7h2M5 7h5M1 11h2M5 11h5" />;
const dockGroups = [
  [<Svg size={26}><path d="M3 2h5v5H3zM3 9h5v5H3z" /><path d="M3 16h5v6H3z" fill="currentColor" /><path d="M14 20q8-7 1-14" strokeWidth="2.500" /><path d="M12 3h8l-7 7z" fill="currentColor" /></Svg>],
  [<HalfCircle size={22} />, <Svg size={28}><path d="M8 2h15v16H12z" fill="#888" stroke="none" /><text x="0" y="19" fontSize="18" fontStyle="italic" fill="#ddd" stroke="none">fx</text></Svg>],
  [<Svg size={28}>{ListLines}<path d="M23 4l-9 9" strokeWidth="3" /><path d="M13 12q-5 0-6 9q8-1 8-7z" fill="currentColor" /></Svg>, <Svg size={28}><path d="M1 7q5-6 9 0-4 5-9 0z" fill="currentColor" /><path d="M11 7h12M2 17h12" strokeWidth="2.600" /><path d="M15 17q5-5 8-4v8q-4 1-8-4z" fill="currentColor" /></Svg>],
  [<span className="flex"><Svg size={12}><path d="M1 3h4M9 3h13M1 11h4M9 11h13M1 19h4M9 19h13" strokeWidth="3" /></Svg><FaStamp size={17} className="mt-1" /></span>],
  [<span className="border-r-2 border-[#ddd] pr-[2px] text-[20px] leading-[20px]">A</span>, <Pilcrow />],
  [<span className="flex items-end"><Square size={10} strokeWidth={3} /><Pilcrow size={19} /></span>, <span className="flex items-end"><Square size={10} strokeWidth={3} /><span className="text-[18px] font-bold leading-[20px]">A</span></span>],
  [<FaTools size={21} />],
  [<Svg size={24}><path d="M2 2h17v19H2z" /><path d="M6 5h16v17H6z" fill="#535353" /><path d="M13 5h6v10l-3-3-3 3z" fill="currentColor" /></Svg>],
];

const Grip = () => <span className="mt-1 h-[5px] w-6 bg-[repeating-linear-gradient(90deg,#3d3d3d_0_2px,#535353_2px_3px)]" />;

function IconDock() {
  return (
    <aside className="flex w-[50px] shrink-0 flex-col border-x border-[#383838] text-[#dcdcdc]">
      <div className="flex h-[15px] items-center justify-end bg-[#424242] pr-[7px]"><ChevronsLeft size={11} /></div>
      {dockGroups.map((group, i) => (
        <div key={i} className={`flex flex-col items-center border-t border-[#383838] ${group.length > 1 ? 'h-[86px] pb-1' : 'h-[51px] pb-1'} ${i === dockGroups.length - 1 ? 'border-b' : ''}`}>
          <Grip />
          {group.map((g, j) => (
            <button key={j} className="flex w-full flex-1 items-center justify-center">{g}</button>
          ))}
        </div>
      ))}
    </aside>
  );
}

function Field({ label, value }) {
  return (
    <label className="flex items-center gap-[5px]">
      <span className="w-[12px] text-right text-[#c8c8c8]">{label}</span>
      <input defaultValue={value} className="h-[21px] w-[66px] border border-[#666] bg-[#454545] pl-[5px] text-[#eee]" />
    </label>
  );
}

function SectionTitle({ children }) {
  return (
    <h3 className="flex items-center gap-[10px] text-[13px] font-bold leading-[16px] text-[#eee]">
      <ChevronDown size={12} className="text-[#ccc]" />{children}
    </h3>
  );
}

const AlignBars = ({ d, line }) => (
  <Svg size={21} className="text-[#999]"><path d={line} /><path d={d} fill="currentColor" stroke="none" /></Svg>
);

function Properties() {
  return (
    <section className="flex h-[471px] shrink-0 flex-col border-b-[4px] border-[#444]">
      <div className="flex h-[35px] shrink-0 bg-[#424242]">
        <button className="w-[84px] border-r border-[#383838] bg-[#535353] pb-[3px] text-[12px] font-bold text-white">Properties</button>
        <Menu size={12} className="ml-auto mr-[6px] mt-[11px]" />
      </div>
      <div className="flex h-[42px] shrink-0 items-center gap-2 border-b border-[#404040] pl-3 pt-[2px]">
        <span className="flex h-7 w-7 items-center justify-center border border-[#666] bg-[#363636]"><Picture size={20} /></span>
        Pixel Layer
      </div>
      <div className="flex min-h-0">
        <div className="min-w-0 flex-1">
          <div className="h-[146px] border-b border-[#404040] pl-2 pt-[10px]">
            <SectionTitle>Transform</SectionTitle>
            <div className="mt-[13px] flex items-center">
              <button aria-label="Link size" className="ml-[3px] flex h-8 w-[30px] items-center justify-center border border-[#666] bg-[#383838]"><Link2 size={18} className="rotate-90" /></button>
              <div className="ml-[14px] grid grid-cols-[83px_83px] gap-x-[21px] gap-y-[10px]">
                <Field label="W" value="5416 px" /><Field label="X" value="-356 px" />
                <Field label="H" value="3046 px" /><Field label="Y" value="159 px" />
              </div>
            </div>
            <div className="mt-[15px] flex items-center pl-[43px]">
              <AngleGlyph size={18} />
              <span className="ml-[6px]"><DarkCombo label="Angle" value="0.00°" /></span>
              <Svg size={22} className="ml-[41px]"><path d="M12 2v20" strokeDasharray="2 1.500" /><path d="M2 6v12l6-6z" /><path d="M22 6v12l-6-6z" fill="currentColor" /></Svg>
              <Svg size={22} className="ml-[13px]"><path d="M2 12h20" strokeDasharray="2 1.500" /><path d="M6 2h12l-6 6z" /><path d="M6 22h12l-6-6z" fill="currentColor" /></Svg>
            </div>
          </div>
          <div className="h-[137px] border-b border-[#404040] pl-2 pt-[11px]">
            <SectionTitle>Align and Distribute</SectionTitle>
            <div className="ml-[4px] mt-[12px] leading-[18px]">Align:</div>
            <div className="ml-[8px] mt-[13px] flex gap-[15px]">
              <AlignBars line="M2 1v22" d="M5 5h10v6H5zM5 14h16v6H5z" />
              <AlignBars line="M12 1v22" d="M7 5h10v6H7zM4 14h16v6H4z" />
              <AlignBars line="M22 1v22" d="M9 5h10v6H9zM3 14h16v6H3z" />
              <span className="w-[8px]" />
              <AlignBars line="M1 3h22" d="M4 5h6v17H4zM14 5h6v11h-6z" />
              <AlignBars line="M1 12h22" d="M4 4h6v16H4zM14 6h6v12h-6z" />
              <AlignBars line="M1 21h22" d="M4 2h6v17H4zM14 8h6v11h-6z" />
            </div>
            <Svg size={18} className="ml-[213px] mt-[18px]"><path d="M2 12h4M10 12h4M18 12h4" strokeWidth="4" /></Svg>
          </div>
          <div className="pl-2 pt-[9px]">
            <SectionTitle>Quick Actions</SectionTitle>
            <button className="ml-[3px] mt-[14px] h-[27px] w-[232px] rounded-sm border border-[#666] bg-[#464646] text-[#eee]">Remove Background</button>
          </div>
        </div>
        <div className="flex h-[358px] w-5 shrink-0 flex-col items-center bg-[#4a4a4a] pt-2">
          <ChevronUp size={11} />
          <span className="mt-[3px] h-[256px] w-[14px] bg-[#696969]" />
          <ChevronDown size={11} className="mb-[7px] mt-auto" />
        </div>
      </div>
    </section>
  );
}

function Layers() {
  return (
    <section className="flex min-h-0 flex-1 flex-col">
      <div className="flex h-[36px] shrink-0 border-b border-[#383838] bg-[#424242] text-[12px] font-bold text-[#a8a8a8]">
        <button className="w-[42px] border-r border-[#383838] pb-1">3D</button>
        <button className="-mb-px w-[60px] bg-[#535353] pb-1 text-white">Layers</button>
        <button className="w-[74px] border-x border-[#383838] pb-1">Channels</button>
        <Menu size={12} className="ml-auto mr-[6px] mt-[11px]" />
      </div>
      <div className="flex h-[38px] shrink-0 items-center border-b border-[#404040] pl-1 pt-[7px]">
        <div className="relative w-[108px]">
          <Search size={13} className="absolute left-[9px] top-[6px]" />
          <select aria-label="Filter layers" className="h-6 w-full appearance-none rounded-sm border border-[#666] bg-[#454545] pl-[27px] text-[#eee]"><option>Kind</option></select>
          <ChevronDown size={11} className="pointer-events-none absolute right-[3px] top-[7px]" />
        </div>
        <div className="ml-[16px] flex flex-1 items-center justify-between pr-[6px]">
          <Picture size={17} /><HalfCircle size={15} /><TypeGlyph size={15} />
          <Svg size={17}><path d="M5 5h14v14H5z" /><path d="M2 2h5v5H2zM17 2h5v5h-5zM2 17h5v5H2zM17 17h5v5h-5z" fill="#535353" /></Svg>
          <Svg size={18}><path d="M9 8V2h8l4 4v14h-7" strokeWidth="2" /><path d="M3 11h11v11H3z" fill="currentColor" /></Svg>
          <span className="flex h-[22px] w-[10px] justify-center rounded-full bg-[#3a3a3a]"><span className="h-[10px] w-[10px] rounded-full bg-[#e4e4e4]" /></span>
        </div>
      </div>
      <div className="flex h-[35px] shrink-0 items-center border-b border-[#404040] pl-1 pr-[6px] pt-[3px]">
        <DarkSelect label="Blend mode" value="Normal" className="mr-[9px] w-[162px]" />
        <span className="mr-auto">Opacity:</span>
        <DarkCombo label="Layer opacity" value="100%" />
      </div>
      <div className="flex h-[39px] shrink-0 items-center pl-2 pr-[6px]">
        Lock:
        <div className="ml-[12px] flex items-center gap-[12px]">
          <svg width="14" height="14" viewBox="0 0 14 14"><path d="M0 0h14v14H0z" fill="#ddd" /><path d="M4 1h3v3H4zM10 1h3v3h-3zM1 4h3v3H1zM7 4h3v3H7zM4 7h3v3H4zM10 7h3v3h-3zM1 10h3v3H1zM7 10h3v3H7z" fill="#444" /></svg>
          <FaPaintBrush size={15} /><FaArrowsAlt size={15} />
          <Svg size={17}><path d="M5 1v4M1 5h4M5 5h10l5 5v9H5zM20 19v4M20 19h4M5 19v4M1 19h4M20 1v4" strokeWidth="1.800" /></Svg>
          <FaLock size={14} />
        </div>
        <span className="ml-auto mr-[5px]">Fill:</span>
        <DarkCombo label="Fill" value="100%" />
      </div>
      <div className="flex min-h-0 flex-1 bg-[#4b4b4b]">
        <ul className="flex-1 border-r border-[#494949]">
          <li className="flex h-10 items-center border-b border-[#404040] bg-[#6a6a6a]">
            <span className="flex h-full w-[38px] items-center justify-center border-r border-[#404040] bg-[#535353]"><FaEye size={15} /></span>
            <span className="ml-[3px] flex h-[34px] w-[44px] items-center justify-center border border-white">
              <svg width="38" height="28" viewBox="0 0 38 28" className="border border-[#333] bg-white">
                <path d="M0 2h38v4H0z" fill="#555" /><path d="M3 7h5v12H3z" fill="#11e" /><path d="M31 6h7v18h-7z" fill="#888" /><path d="M9 7h18v13H9z" fill="#e8e8e8" /><path d="M21 7h5v1h-5z" fill="#0078d7" /><path d="M12 10h6M12 13h4M19 15h6" stroke="#888" /><path d="M4 9h2M6 13h2M3 16h3" stroke="#fff" /><path d="M0 24h38v1H0z" fill="#2b3b39" />
              </svg>
            </span>
            <span className="ml-[10px] text-[#eee]">Layer 1</span>
          </li>
          <li className="flex h-[42px] items-center border-b border-[#404040] bg-[#535353]">
            <span className="flex h-full w-[38px] items-center justify-center border-r border-[#404040]"><FaEye size={15} /></span>
            <span className="ml-[5px] h-[30px] w-[39px] border border-[#333] bg-white" />
            <span className="ml-[13px] italic text-[#eee]">Background</span>
            <Svg size={17} className="ml-auto mr-[17px]"><path d="M3 10h18v12H3zM7 10V6q0-4 5-4t5 4v4" strokeWidth="1.800" /><circle cx="12" cy="16" r="1.500" fill="currentColor" /></Svg>
          </li>
        </ul>
        <span className="w-5 shrink-0 bg-[#4f4f4f]" />
      </div>
      <div className="flex h-[33px] shrink-0 items-center justify-between border-t border-[#404040] pb-[2px] pl-[40px] pr-[33px]">
        <Link2 size={18} className="text-[#8a8a8a]" />
        <span className="text-[16px] italic leading-[16px]">fx</span>
        <Svg size={17}><path d="M1 4h22v16H1z" fill="currentColor" /><circle cx="12" cy="12" r="4.500" fill="#535353" stroke="none" /></Svg>
        <HalfCircle size={15} /><FaFolder size={15} />
        <Svg size={17}><path d="M3 3h18v18H3zM12 8v8M8 12h8" strokeWidth="1.800" /></Svg>
        <Trash />
      </div>
    </section>
  );
}

function DocumentArea() {
  return (
    <main className="flex min-w-0 flex-1 flex-col border-r border-[#383838] pl-px">
      <div className="flex h-[37px] shrink-0 bg-[#424242]">
        {files.map((f) => (
          <div key={f.name} className={`flex shrink-0 items-center justify-between whitespace-nowrap border-r border-[#383838] pl-[8px] pr-[12px] text-[13px] font-bold ${f.width} ${f.active ? 'bg-[#535353] text-[#f0f0f0]' : 'text-[#a2a2a2]'}`}>
            {f.name}
            <button aria-label={`Close ${f.name}`}><X size={12} strokeWidth={1.500} /></button>
          </div>
        ))}
      </div>
      <div className="flex min-h-0 flex-1">
        <div className="flex min-w-0 flex-1 flex-col">
          <div className="flex min-h-0 flex-1 bg-[#282828] px-[130px] pb-[11px] pt-[10px]"><Artboard /></div>
          <div className="mb-[2px] flex h-[20px] shrink-0 items-center bg-[#4a4a4a] text-[12px]">
            <span className="flex h-full w-[62px] shrink-0 items-center bg-[#434343] pl-[17px]">25%</span>
            <span className="flex h-full w-[228px] shrink-0 items-center justify-between bg-[#535353] pl-[32px]">4961 px x3508 px (300 ppi)<ChevronRight size={12} className="mr-[3px]" /></span>
            <div className="flex h-full flex-1 items-center justify-between px-[6px]">
              <ChevronLeft size={12} />
              <span className="h-[14px] w-[438px] bg-[#696969]" />
              <ChevronRight size={12} />
            </div>
          </div>
        </div>
        <div className="flex w-[21px] flex-col items-center bg-[#4a4a4a] pt-[6px] text-[#999]">
          <ChevronUp size={11} />
          <span className="mt-[274px] h-[317px] w-[15px] bg-[#696969]" />
          <ChevronDown size={11} className="mb-[26px] mt-auto" />
        </div>
      </div>
    </main>
  );
}

export default function App() {
  return (
    <div className="flex h-screen flex-col overflow-hidden bg-[#535353] font-['Noto_Sans','Open_Sans',sans-serif] text-[12px] text-[#dcdcdc]">
      <MenuBar />
      <OptionsBar />
      <div className="flex min-h-0 flex-1">
        <ToolStrip />
        <DocumentArea />
        <IconDock />
        <div className="flex w-[297px] shrink-0 flex-col border-r border-[#383838] pl-px">
          <div className="flex h-[15px] shrink-0 items-center justify-end border-b border-[#383838] bg-[#424242] pr-[6px]"><ChevronsRight size={11} /></div>
          <Properties />
          <Layers />
        </div>
      </div>
      <Taskbar />
    </div>
  );
}
